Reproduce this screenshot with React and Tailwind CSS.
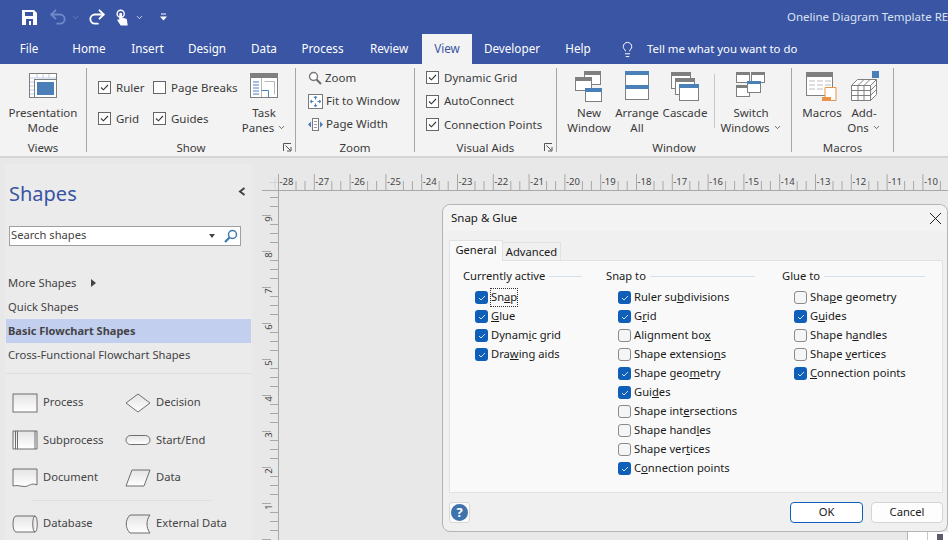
import { ChevronDown, Lightbulb, Redo2, Undo2, X } from 'lucide-react';

const tabs = [
  ['File', 'w-[58px]'],
  ['Home', 'w-[62px]'],
  ['Insert', 'w-[55px]'],
  ['Design', 'w-[64px]'],
  ['Data', 'w-[50px]'],
  ['Process', 'w-[67px]'],
  ['Review', 'w-[66px]'],
  ['View', 'w-[50px] bg-[#f3f3f3] text-[#3955a3]'],
  ['Developer', 'w-[80px]'],
  ['Help', 'w-[52px]'],
];

const GRAY = '#7f7f7f';
const BLUE = '#4a7fb8';

// small window glyph used by the Window group icons
const Win = ({ x, y, w, h, head = GRAY, bar = 4 }) => (
  <g>
    <rect x={x + 0.5} y={y + 0.5} width={w - 1} height={h - 1} fill="#fff" stroke={GRAY} />
    <rect x={x} y={y} width={w} height={bar} fill={head} />
  </g>
);

const RibbonCheck = ({ checked = true }) => (
  <span className="flex h-[13px] w-[13px] shrink-0 items-center justify-center border border-[#666] bg-[#fdfdfd]">
    {checked && (
      <svg width="9" height="7" viewBox="0 0 9 7">
        <path d="M1 3.500 3.400 5.800 8 1" fill="none" stroke="#333" strokeWidth="1.100" />
      </svg>
    )}
  </span>
);

const Launcher = () => (
  <svg className="absolute bottom-[4px] right-[3px]" width="9" height="9" viewBox="0 0 9 9">
    <path d="M.5 8V.5H8M2.500 2.500 7.500 7.500M4 8h4V4" fill="none" stroke="#555" />
  </svg>
);

const BigButton = ({ lines, icon, arrow, className = '' }) => (
  <div className={`flex flex-col items-center ${className}`}>
    <div className="flex h-[37px] items-start justify-center">{icon}</div>
    {lines.map((line, i) => (
      <div key={line} className="flex h-[15px] items-center whitespace-nowrap leading-[15px]">
        {line}
        {arrow && i === lines.length - 1 && <ChevronDown size={9} strokeWidth={2} className="ml-[3px]" />}
      </div>
    ))}
  </div>
);

const Group = ({ label, className, children, launcher }) => (
  <div className={`relative flex h-[88px] shrink-0 flex-col ${className}`}>
    <div className="flex-1">{children}</div>
    <div className="h-[16px] text-center leading-[16px]">{label}</div>
    {launcher && <Launcher />}
  </div>
);

const Sep = () => <div className="h-[84px] w-px shrink-0 bg-[#a6a6a6]" />;

const CheckLine = ({ label, checked, className = '' }) => (
  <div className={`flex items-center gap-[5px] whitespace-nowrap ${className}`}>
    <RibbonCheck checked={checked} />
    {label}
  </div>
);

const Ribbon = () => (
  <div className="flex h-[92px] bg-[#f3f3f3] pt-[4px] text-[11.5px] text-[#3b3b3b]">
    <Group label="Views" className="w-[86px]">
      <BigButton
        lines={['Presentation', 'Mode']}
        icon={
          <svg className="mt-[5px]" width="28" height="25" viewBox="0 0 28 25">
            <rect x=".5" y=".5" width="27" height="24" fill="#fff" stroke={GRAY} />
            <path d="M1 5h26M1 9h4M1 13h4M1 17h4M1 21h4M8 1v4M14 1v4M20 1v4" stroke="#b9cfe6" />
            <rect x="5.500" y="6.500" width="22" height="18" fill="#fff" stroke={GRAY} />
            <rect x="8" y="9" width="17" height="13" fill={BLUE} />
          </svg>
        }
      />
    </Group>
    <Sep />
    <Group label="Show" className="w-[208px]" launcher>
      <div className="flex">
        <div className="ml-[11px] flex w-[55px] flex-col gap-[16px] pt-[12px]">
          <CheckLine label="Ruler" className="h-[15px]" />
          <CheckLine label="Grid" className="h-[15px]" />
        </div>
        <div className="flex w-[93px] flex-col gap-[16px] pt-[12px]">
          <CheckLine label="Page Breaks" checked={false} className="h-[15px]" />
          <CheckLine label="Guides" className="h-[15px]" />
        </div>
        <BigButton
          lines={['Task', 'Panes']}
          arrow
          className="w-[36px]"
          icon={
            <svg className="mt-[5px]" width="28" height="25" viewBox="0 0 28 25">
              <rect x=".5" y=".5" width="27" height="24" fill="#fff" stroke={GRAY} />
              <rect width="28" height="5" fill={GRAY} />
              <path d="M3 9h6M3 12h6M3 15h6M3 18h6M3 21h6" stroke={BLUE} />
              <path d="M11.500 5v19M14.500 8.500h10v13" fill="none" stroke="#b8b8b8" />
              <path d="M11.500 17.500h7v7" fill="none" stroke={BLUE} />
            </svg>
          }
        />
      </div>
    </Group>
    <Sep />
    <Group label="Zoom" className="w-[118px]">
      <div className="flex flex-col gap-[8px] pl-[12px] pt-[2.500px]">
        <div className="flex h-[15px] items-center gap-[3px]">
          <svg width="14" height="14" viewBox="0 0 14 14">
            <circle cx="5.500" cy="5.500" r="4" fill="#fff" stroke="#7a7a7a" strokeWidth="1.400" />
            <path d="M8.500 8.500 13 13" stroke="#6a6a6a" strokeWidth="2" />
          </svg>
          Zoom
        </div>
        <div className="flex h-[15px] items-center gap-[3px]">
          <svg width="15" height="15" viewBox="0 0 15 15">
            <rect x=".5" y=".5" width="14" height="14" fill="#fff" stroke="#7a7a7a" />
            <path d="M7.500 2.500v3M7.500 9.500v3M2.500 7.500h3M9.500 7.500h3M6 4l1.500-2L9 4M6 11l1.500 2L9 11M4 6 2 7.500 4 9M11 6l2 1.500L11 9" fill="none" stroke={BLUE} />
          </svg>
          Fit to Window
        </div>
        <div className="flex h-[15px] items-center gap-[3px]">
          <svg width="15" height="13" viewBox="0 0 15 13">
            <rect x="4.500" y=".5" width="6" height="12" fill="#fff" stroke="#7a7a7a" />
            <path d="M6 3.500h3M6 6.500h3M6 9.500h3" stroke="#999" />
            <path d="M3 3.500v6L0 6.500zM12 3.500v6l3-3z" fill={BLUE} />
          </svg>
          Page Width
        </div>
      </div>
    </Group>
    <Sep />
    <Group label="Visual Aids" className="w-[141px]" launcher>
      <div className="flex flex-col gap-[8.500px] pl-[11px] pt-[2px]">
        <CheckLine label="Dynamic Grid" className="h-[15px]" />
        <CheckLine label="AutoConnect" className="h-[15px]" />
        <CheckLine label="Connection Points" className="h-[15px]" />
      </div>
    </Group>
    <Sep />
    <Group label="Window" className="w-[234px]">
      <div className="flex">
        <BigButton
          lines={['New', 'Window']}
          className="ml-[8px] w-[48px]"
          icon={
            <svg className="mt-[3px]" width="28" height="32" viewBox="0 0 28 32">
              <Win x={9} y={0} w={17} h={14} />
              <Win x={0} y={6} w={17} h={14} />
              <Win x={10} y={17} w={17} h={14} head={BLUE} />
            </svg>
          }
        />
        <BigButton
          lines={['Arrange', 'All']}
          className="w-[48px]"
          icon={
            <svg className="mt-[3px]" width="24" height="30" viewBox="0 0 24 30">
              <Win x={0} y={0} w={24} h={15} head={BLUE} />
              <Win x={0} y={14} w={24} h={15} head={BLUE} />
            </svg>
          }
        />
        <BigButton
          lines={['Cascade', ' ']}
          className="w-[48px]"
          icon={
            <svg className="mt-[4px]" width="29" height="30" viewBox="0 0 29 30">
              <Win x={0} y={0} w={20} h={17} />
              <Win x={4} y={6} w={20} h={17} />
              <Win x={8} y={12} w={20} h={17} head={BLUE} />
            </svg>
          }
        />
        <div className="ml-[5px] mt-[6px] h-[54px] w-px bg-[#c8c8c8]" />
        <BigButton
          lines={['Switch', 'Windows']}
          arrow
          className="ml-[10px] w-[52px]"
          icon={
            <svg className="mt-[4px]" width="30" height="26" viewBox="0 0 30 26">
              <Win x={0} y={0} w={14} h={11} bar={3} />
              <Win x={15} y={0} w={14} h={11} bar={3} />
              <Win x={0} y={13} w={14} h={12} bar={3} />
              <Win x={11} y={9} w={14} h={12} head={BLUE} bar={3} />
            </svg>
          }
        />
      </div>
    </Group>
    <Sep />
    <Group label="Macros" className="w-[101px]">
      <div className="flex">
        <BigButton
          lines={['Macros', ' ']}
          className="ml-[9px] w-[42px]"
          icon={
            <svg className="mt-[4px]" width="32" height="30" viewBox="0 0 32 30">
              <rect x=".5" y=".5" width="26" height="23" fill="#fff" stroke={GRAY} />
              <rect width="27" height="5" fill={GRAY} />
              <path d="M3 9h6M11 9h6M19 9h6M3 13h6M11 13h6M19 13h6M3 17h6M11 17h6" stroke="#bdbdbd" />
              <path d="M19 15.500h11v13H19z" fill="#fff" stroke="#e8924a" />
              <rect x="16" y="25" width="9" height="4" fill="#e8924a" />
            </svg>
          }
        />
        <BigButton
          lines={['Add-', 'Ons']}
          arrow
          className="w-[42px]"
          icon={
            <svg className="mt-[3px]" width="29" height="31" viewBox="0 0 29 31">
              <path d="M1.500 14.500h19v15h-19zM8 14.500v15M14 14.500v15M1.500 19.500h19M1.500 24.500h19M1.500 14.500l6-6h19l-6 6M20.500 29.500l6-6v-15M20.500 19.500l6-6M20.500 24.500l6-6M8 14.500l6-6M14 14.500l6-6" fill="#fff" stroke={GRAY} />
              <rect x="22" y="0" width="7" height="7" fill={BLUE} />
            </svg>
          }
        />
      </div>
    </Group>
    <Sep />
  </div>
);

const TitleBar = () => (
  <div className="flex h-[34px] w-max items-center text-white">
    <svg className="ml-[22px]" width="15" height="15" viewBox="0 0 15 15">
      <path d="M0 0h12l3 3v12H0z" fill="#fff" />
      <rect x="3" y="2" width="8" height="4" fill="#3955a3" />
      <rect x="4" y="9" width="7" height="6" fill="#3955a3" />
      <rect x="7" y="11" width="2" height="4" fill="#fff" />
    </svg>
    <Undo2 className="ml-[11px] text-[#7089c8]" size={20} strokeWidth={2.200} />
    <ChevronDown className="ml-[3px] text-[#7089c8]" size={9} strokeWidth={2} />
    <Redo2 className="ml-[7px]" size={20} strokeWidth={2.200} />
    <svg className="ml-[9px]" width="15" height="17" viewBox="0 0 16 18">
      <circle cx="5" cy="5" r="3.800" fill="none" stroke="#fff" strokeWidth="1.500" />
      <path d="M3.500 5.500a1.500 1.500 0 0 1 3 0v3.500l5 1.500 1 7H5l-4-6 2.500-.5z" fill="#fff" />
    </svg>
    <ChevronDown className="ml-[4px]" size={9} strokeWidth={2} />
    <svg className="ml-[16px]" width="7" height="8" viewBox="0 0 7 8">
      <path d="M1 1h5" stroke="#fff" />
      <path d="M0 3.500h7L3.500 7.500z" fill="#fff" />
    </svg>
    <div className="ml-[620px] whitespace-nowrap text-[11.5px] text-[#dbe2f2]">Oneline Diagram Template REV</div>
  </div>
);

const TabBar = () => (
  <div className="flex h-[30px] items-stretch text-[11.700px] text-white">
    {tabs.map(([name, cls]) => (
      <div key={name} className={`flex items-center justify-center ${cls}`}>
        {name}
      </div>
    ))}
    <Lightbulb className="ml-[15px] self-center text-white" size={17} strokeWidth={1.400} />
    <div className="ml-[11px] self-center whitespace-nowrap text-[11.400px]">Tell me what you want to do</div>
  </div>
);

const Rect3 = ({ children, w = 26, h = 20 }) => (
  <svg width={w} height={h} viewBox={`0 0 ${w} ${h}`} className="shrink-0">
    <defs>
      <linearGradient id="sg" x1="0" y1="0" x2="0" y2="1">
        <stop offset="0" stopColor="#e4e4e4" />
        <stop offset="1" stopColor="#ffffff" />
      </linearGradient>
    </defs>
    <g fill="url(#sg)" stroke="#6e6e6e">{children}</g>
  </svg>
);

const stencil = [
  ['Process', <rect key="p" x="1" y="1" width="24" height="18" />, 'Decision', <path key="d" d="M13 1 25 10 13 19 1 10z" />],
  ['Subprocess', <path key="s" d="M1 1h24v18H1zM3.500 1v18M5.500 1v18M23 1v18" />, 'Start/End', <rect key="t" x="1" y="5.500" width="24" height="9" rx="4.500" />],
  ['Document', <path key="o" d="M1 1h24v16c-6-3-8 2-13 1.500S5 17 1 18z" />, 'Data', <path key="a" d="M7 2h18l-6 16H1z" />],
];

const StencilItem = ({ label, shape }) => (
  <div className="flex w-[113px] items-center gap-[5px] whitespace-nowrap">
    <Rect3>{shape}</Rect3>
    {label}
  </div>
);

const Sidebar = () => (
  <div className="ml-[5px] mt-[6px] w-[247px] shrink-0 bg-[#ebebeb] text-[11.200px] text-[#444]">
    <div className="mt-[15px] flex h-[30px] items-center justify-between pl-[4px] pr-[6px]">
      <div className="text-[20px] leading-[28px] text-[#3955a3]">Shapes</div>
      <svg width="8" height="9" viewBox="0 0 8 9" className="mb-[6px]">
        <path d="M6.500 1 2 4.500 6.500 8" fill="none" stroke="#444" strokeWidth="2" />
      </svg>
    </div>
    <div className="ml-[4px] mt-[17px] flex h-[20px] w-[232px] items-center border border-[#a0a0a0] bg-white pb-[1px] pl-[1px] pr-[2px] text-[#444]">
      <span className="flex-1">Search shapes</span>
      <svg width="6" height="4" viewBox="0 0 6 4" className="mr-[9px]">
        <path d="M0 0h6L3 4z" fill="#444" />
      </svg>
      <svg width="14" height="14" viewBox="0 0 14 14">
        <circle cx="8.500" cy="5.500" r="4" fill="#fff" stroke="#3f78b0" strokeWidth="1.500" />
        <path d="M5.500 8.500 1 13" stroke="#3f78b0" strokeWidth="2.200" />
      </svg>
    </div>
    <div className="mt-[25px] flex h-[24px] items-center pl-[3px]">
      More Shapes
      <svg width="5" height="8" viewBox="0 0 5 8" className="ml-[15px]">
        <path d="M0 0 5 4 0 8z" fill="#444" />
      </svg>
    </div>
    <div className="flex h-[24px] items-center pl-[3px]">Quick Shapes</div>
    <div className="mx-[1px] flex h-[24px] items-center bg-[#c3cfef] pl-[2px] text-[11px] font-bold">Basic Flowchart Shapes</div>
    <div className="flex h-[24px] items-center pl-[3px]">Cross-Functional Flowchart Shapes</div>
    <div className="mx-[1px] mt-[6px] h-px bg-[#dedede]" />
    <div className="pl-[7px] pt-[10px]">
      {stencil.map(([a, aShape, b, bShape]) => (
        <div key={a} className="flex h-[37.500px] items-center">
          <StencilItem label={a} shape={aShape} />
          <StencilItem label={b} shape={bShape} />
        </div>
      ))}
    </div>
    <div className="ml-[27px] mt-[3px] h-px w-[179px] bg-[#dedede]" />
    <div className="flex h-[38px] items-center pl-[7px] pt-[8px]">
      <StencilItem label="Database" shape={<path d="M4 2h19c3 0 3 16 0 16H4C0 18 0 2 4 2zM23 2c-3 0-3 16 0 16" />} />
      <StencilItem label="External Data" shape={<path d="M5 1h20c-4 5-4 13 0 18H5C0 14 0 6 5 1z" />} />
    </div>
  </div>
);

const HRuler = () => (
  <svg width="686" height="17" viewBox="0 0 686 17" className="block">
    <path d="M7 8.500h12M13 3v12" stroke="#d6d6d6" />
    <path d="M0 16.500h686" stroke="#a8a8a8" />
    {Array.from({ length: 19 }, (_, i) => {
      const x = 16.500 + i * 35.800;
      return (
        <g key={i}>
          <path d={`M${x} 0v16M${x + 17.500} 7v9M${x + 26.500} 7v9`} stroke="#a8a8a8" />
          <text x={x + 1} y={11} fontSize="9.500" fill="#444">{-28 + i}</text>
        </g>
      );
    })}
  </svg>
);

const VRuler = () => (
  <svg width="17" height="350" viewBox="0 0 17 350" className="block">
    <path d="M16.500 0v350" stroke="#a8a8a8" />
    {Array.from({ length: 39 }, (_, i) => {
      const y = 6.500 + i * 9;
      const major = i % 4 === 2;
      return <path key={i} d={`M${major ? 0 : 8} ${y}h9`} stroke="#a8a8a8" />;
    })}
    {Array.from({ length: 9 }, (_, i) => {
      const y = 28 + i * 36;
      return (
        <text key={i} x="7" y={y} fontSize="9.500" fill="#444" textAnchor="middle" transform={`rotate(-90 7 ${y})`} dominantBaseline="middle">
          {9 - i}
        </text>
      );
    })}
  </svg>
);

const snapActive = [
  [<>Sn<u>a</u>p</>, true],
  [<><u>G</u>lue</>, true],
  [<>Dynam<u>i</u>c grid</>, true],
  [<>Dra<u>w</u>ing aids</>, true],
];

const snapTo = [
  [<>Ruler su<u>b</u>divisions</>, true],
  [<>G<u>r</u>id</>, true],
  [<>Alignment bo<u>x</u></>, false],
  [<>Shape extensio<u>n</u>s</>, false],
  [<>Shape geo<u>m</u>etry</>, true],
  [<>Gui<u>d</u>es</>, true],
  [<>Shape int<u>e</u>rsections</>, false],
  [<>Shape hand<u>l</u>es</>, false],
  [<>Shape ver<u>t</u>ices</>, false],
  [<>C<u>o</u>nnection points</>, true],
];

const glueTo = [
  [<>Sha<u>p</u>e geometry</>, false],
  [<>G<u>u</u>ides</>, true],
  [<>Shape h<u>a</u>ndles</>, false],
  [<>Shape <u>v</u>ertices</>, false],
  [<><u>C</u>onnection points</>, true],
];

const DialogCheck = ({ checked }) =>
  checked ? (
    <span className="flex h-[13px] w-[13px] shrink-0 items-center justify-center rounded-[3px] bg-[#0f5fb8]">
      <svg width="8" height="6" viewBox="0 0 8 6">
        <path d="M1 3 3 5 7 1" fill="none" stroke="#cfe0f4" />
      </svg>
    </span>
  ) : (
    <span className="h-[13px] w-[13px] shrink-0 rounded-[3px] border border-[#8a8a8a] bg-[#f5f5f5]" />
  );

const Column = ({ title, items, className, lineClass }) => (
  <div className={className}>
    <div className="flex h-[16px] items-center">
      <span className="whitespace-nowrap">{title}</span>
      <span className={`ml-[4px] h-px bg-[#d5dfea] ${lineClass}`} />
    </div>
    <div className="ml-[12px] mt-[4px] flex flex-col">
      {items.map(([label, checked], i) => (
        <div key={i} className="flex h-[19px] items-center gap-[3px] whitespace-nowrap">
          <DialogCheck checked={checked} />
          <span className={i === 0 && title === 'Currently active' ? 'outline-1 outline-dotted outline-[#333]' : ''}>{label}</span>
        </div>
      ))}
    </div>
  </div>
);

const Dialog = () => (
  <div className="absolute left-[442px] top-[204px] flex h-[328px] w-[506px] flex-col rounded-[8px] border border-[#b4b4b4] bg-[#f0f0f0] text-[11.200px] text-[#1a1a1a]">
    <div className="flex h-[26px] items-center justify-between rounded-t-[8px] bg-[#f3f3f3] pl-[8px] pr-[1px] text-[11.500px]">
      Snap &amp; Glue
      <X size={21} strokeWidth={1.100} />
    </div>
    <div className="ml-[6px] mt-[9px] flex h-[20px] items-end">
      <div className="z-10 -mb-px flex h-[21px] w-[54px] items-center justify-center border border-b-0 border-[#e2e2e2] bg-[#f9f9f9] pb-[2px]">General</div>
      <div className="flex h-[18px] w-[58px] items-center justify-center border border-b-0 border-l-0 border-[#e2e2e2] pt-[1px]">Advanced</div>
    </div>
    <div className="ml-[6px] mr-[4px] flex h-[233px] border border-[#e2e2e2] bg-[#f9f9f9] pl-[13px] pt-[7px]">
      <Column title="Currently active" items={snapActive} className="w-[143px]" lineClass="w-[33px]" />
      <Column title="Snap to" items={snapTo} className="w-[176px]" lineClass="w-[105px]" />
      <Column title="Glue to" items={glueTo} className="w-[143px]" lineClass="w-[102px]" />
    </div>
    <div className="flex flex-1 items-center pl-[6px] pr-[4px]">
      <div className="flex h-[21px] w-[21px] items-center justify-center rounded-[3px] border border-[#d8d8d8] bg-[#fbfbfb]">
        <span className="flex h-[17px] w-[17px] items-center justify-center rounded-full bg-[#3f73ad] text-[13px] font-bold leading-none text-white">?</span>
      </div>
      <div className="ml-auto flex h-[21px] w-[73px] items-center justify-center rounded-[4px] border border-[#0f5fb8] bg-white">OK</div>
      <div className="ml-[8px] flex h-[21px] w-[72px] items-center justify-center rounded-[4px] border border-[#d4d4d4] bg-[#fdfdfd]">Cancel</div>
    </div>
  </div>
);

const App = () => (
  <div className="relative h-[540px] w-[948px] overflow-hidden bg-[#e8e8e8] font-['Noto_Sans',sans-serif]">
    <div className="bg-[#3955a3]">
      <TitleBar />
      <TabBar />
    </div>
    <Ribbon />
    <div className="h-[2px] bg-[#d4d4d4]" />
    <div className="flex">
      <Sidebar />
      <div className="ml-[10px] mt-[16px]">
        <HRuler />
        <VRuler />
      </div>
    </div>
    <Dialog />
    <div className="absolute bottom-0 right-0 flex h-[8px] w-[41px] border-l border-[#b4b4b4] bg-white">
      <div className="w-[20px] border-r border-[#c8c8c8]" />
      <div className="ml-[9px] mt-[2px] h-[6px] w-[6px] bg-[#5b5b6b]" />
    </div>
  </div>
);

export default App;
